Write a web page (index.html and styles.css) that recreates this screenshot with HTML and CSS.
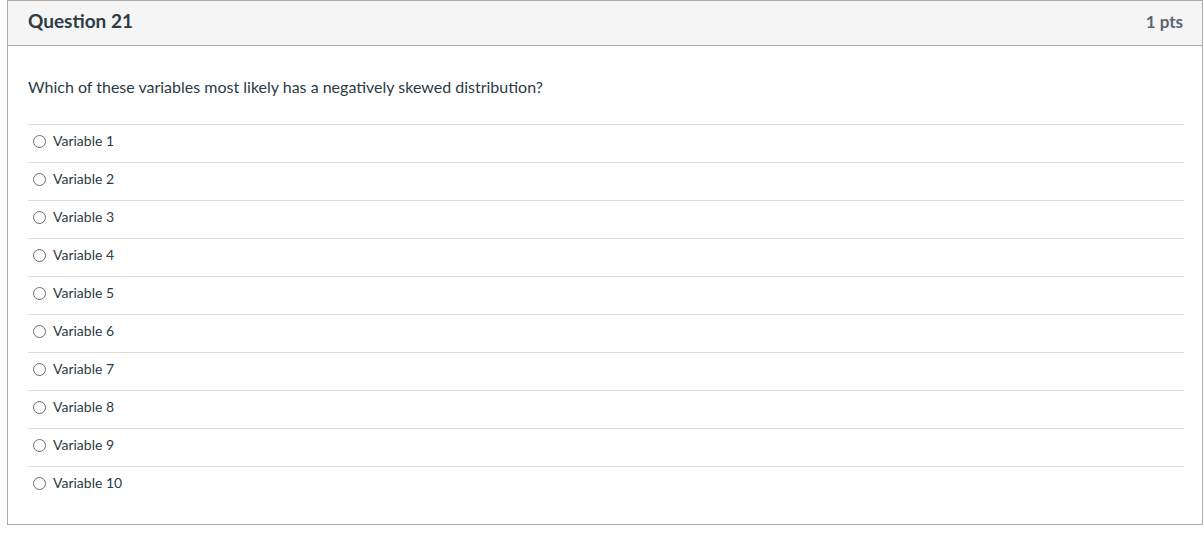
FILE: index.html
```html
<!DOCTYPE html>
<html>
<head>
<meta charset="utf-8">
<link rel="stylesheet" href="styles.css">
</head>
<body>
<div class="quiz">
  <div class="header">
    <div class="title">Question 21</div>
    <div class="pts">1 pts</div>
  </div>
  <div class="content">
    <div class="question">Which of these variables most likely has a negatively skewed distribution?</div>
    <div class="answers">
      <div class="answer"><span class="radio"></span><span class="label">Variable 1</span></div>
      <div class="answer"><span class="radio"></span><span class="label">Variable 2</span></div>
      <div class="answer"><span class="radio"></span><span class="label">Variable 3</span></div>
      <div class="answer"><span class="radio"></span><span class="label">Variable 4</span></div>
      <div class="answer"><span class="radio"></span><span class="label">Variable 5</span></div>
      <div class="answer"><span class="radio"></span><span class="label">Variable 6</span></div>
      <div class="answer"><span class="radio"></span><span class="label">Variable 7</span></div>
      <div class="answer"><span class="radio"></span><span class="label">Variable 8</span></div>
      <div class="answer"><span class="radio"></span><span class="label">Variable 9</span></div>
      <div class="answer"><span class="radio"></span><span class="label">Variable 10</span></div>
    </div>
  </div>
</div>
</body>
</html>
```
FILE: styles.css
```css
html, body {
  margin: 0;
  padding: 0;
  background: #ffffff;
}
body {
  font-family: Lato, "Open Sans", sans-serif;
  color: #2d3b45;
}
.quiz {
  margin-left: 7px;
  width: 1196px;
  box-sizing: border-box;
  border: 1px solid #aaaaaa;
  height: 525px;
}
.header {
  display: flex;
  justify-content: space-between;
  align-items: center;
  height: 44px;
  background: #f5f5f5;
  border-bottom: 1px solid #aaaaaa;
  padding: 0 19px 0 20px;
}
.title {
  font-size: 19px;
  font-weight: bold;
  color: #2d3b45;
  margin-top: -6px;
}
.pts {
  font-size: 17px;
  font-weight: bold;
  color: #5a6670;
  margin-top: -3px;
}
.content {
  padding: 0 18px 0 20px;
}
.question {
  font-size: 16px;
  color: #2d3b45;
  padding-top: 31px;
  height: 47px;
  box-sizing: border-box;
  line-height: 20px;
  margin-bottom: 31px;
}
.answer {
  display: flex;
  align-items: center;
  height: 38px;
  border-top: 1px solid #dddddd;
  box-sizing: border-box;
  padding-left: 5px;
  padding-bottom: 7px;
}
.radio {
  width: 11px;
  height: 11px;
  border: 1px solid #666f76;
  border-radius: 50%;
  margin-right: 7px;
  flex: none;
  margin-top: 2px;
}
.label {
  font-size: 14px;
  color: #2d3b45;
}
```
